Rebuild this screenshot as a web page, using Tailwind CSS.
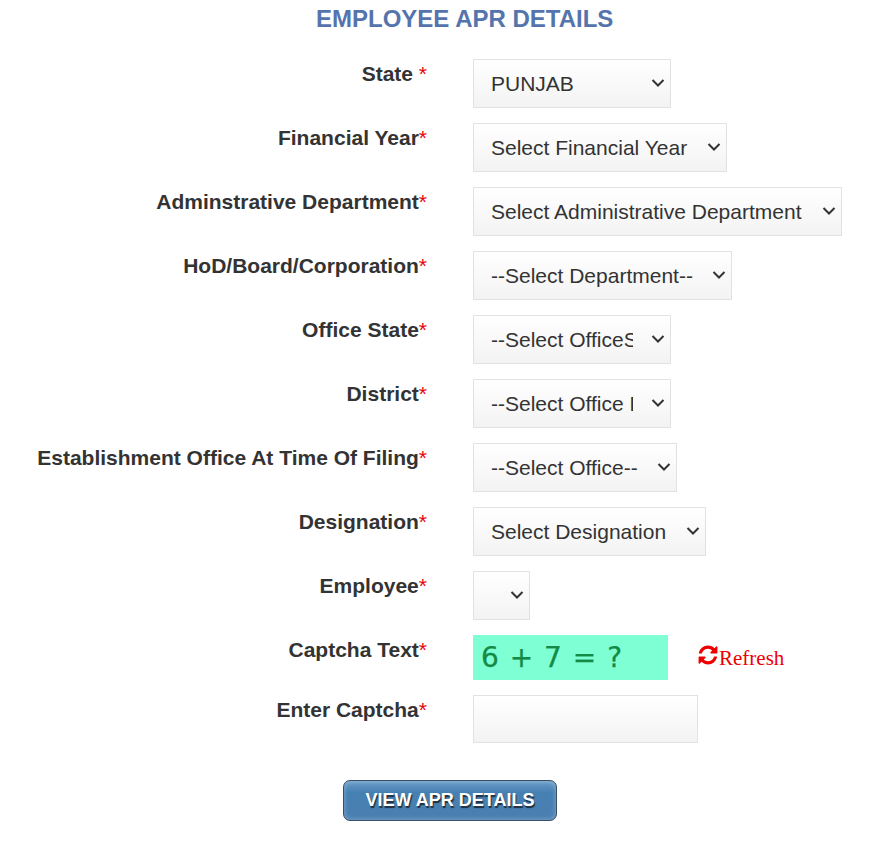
<!DOCTYPE html>
<html lang="en">
<head>
    <meta charset="UTF-8">
    <title>Employee APR Details</title>
    <script src="https://cdn.jsdelivr.net/npm/@tailwindcss/browser@4"></script>
</head>
<body class="bg-white font-['Liberation_Sans',Arial,sans-serif] text-[#333333]">
    <div class="w-[871px] h-[843px] overflow-hidden">
        <h1 class="pl-[316px] pt-[5px] h-[59px] text-[24px] leading-[28px] font-bold text-[#5574ad]">EMPLOYEE APR DETAILS</h1>

        <!-- State -->
        <div class="flex h-[64px]">
            <label class="w-[427px] text-right text-[21px] leading-[30px] font-bold">State <span class="font-normal text-red-600">*</span></label>
            <div class="relative ml-[46px] w-[198px] h-[49px]">
                <select class="appearance-none w-full h-full pl-[17px] pr-[37px] border border-[#e2e2e2] bg-linear-to-b from-white to-[#f3f3f3] text-[21px]"><option>PUNJAB</option></select>
                <svg class="absolute right-[6px] top-[19px] w-[14px] h-[10px] pointer-events-none" viewBox="0 0 14 10" fill="none" stroke="#333" stroke-width="2"><path d="M1.5 2l5.5 5.5L12.500 2"/></svg>
            </div>
        </div>

        <!-- Financial Year -->
        <div class="flex h-[64px]">
            <label class="w-[427px] text-right text-[21px] leading-[30px] font-bold">Financial Year<span class="font-normal text-red-600">*</span></label>
            <div class="relative ml-[46px] w-[254px] h-[49px]">
                <select class="appearance-none w-full h-full pl-[17px] pr-[37px] border border-[#e2e2e2] bg-linear-to-b from-white to-[#f3f3f3] text-[21px]"><option>Select Financial Year</option></select>
                <svg class="absolute right-[6px] top-[19px] w-[14px] h-[10px] pointer-events-none" viewBox="0 0 14 10" fill="none" stroke="#333" stroke-width="2"><path d="M1.5 2l5.5 5.5L12.500 2"/></svg>
            </div>
        </div>

        <!-- Department -->
        <div class="flex h-[64px]">
            <label class="w-[427px] text-right text-[21px] leading-[30px] font-bold">Adminstrative Department<span class="font-normal text-red-600">*</span></label>
            <div class="relative ml-[46px] w-[369px] h-[49px]">
                <select class="appearance-none w-full h-full pl-[17px] pr-[37px] border border-[#e2e2e2] bg-linear-to-b from-white to-[#f3f3f3] text-[21px]"><option>Select Administrative Department</option></select>
                <svg class="absolute right-[6px] top-[19px] w-[14px] h-[10px] pointer-events-none" viewBox="0 0 14 10" fill="none" stroke="#333" stroke-width="2"><path d="M1.5 2l5.5 5.5L12.500 2"/></svg>
            </div>
        </div>

        <!-- HoD -->
        <div class="flex h-[64px]">
            <label class="w-[427px] text-right text-[21px] leading-[30px] font-bold">HoD/Board/Corporation<span class="font-normal text-red-600">*</span></label>
            <div class="relative ml-[46px] w-[259px] h-[49px]">
                <select class="appearance-none w-full h-full pl-[17px] pr-[37px] border border-[#e2e2e2] bg-linear-to-b from-white to-[#f3f3f3] text-[21px]"><option>--Select Department--</option></select>
                <svg class="absolute right-[6px] top-[19px] w-[14px] h-[10px] pointer-events-none" viewBox="0 0 14 10" fill="none" stroke="#333" stroke-width="2"><path d="M1.5 2l5.5 5.5L12.500 2"/></svg>
            </div>
        </div>

        <!-- Office State -->
        <div class="flex h-[64px]">
            <label class="w-[427px] text-right text-[21px] leading-[30px] font-bold">Office State<span class="font-normal text-red-600">*</span></label>
            <div class="relative ml-[46px] w-[198px] h-[49px]">
                <select class="appearance-none w-full h-full pl-[17px] pr-[37px] border border-[#e2e2e2] bg-linear-to-b from-white to-[#f3f3f3] text-[21px]"><option>--Select OfficeState--</option></select>
                <svg class="absolute right-[6px] top-[19px] w-[14px] h-[10px] pointer-events-none" viewBox="0 0 14 10" fill="none" stroke="#333" stroke-width="2"><path d="M1.5 2l5.5 5.5L12.500 2"/></svg>
            </div>
        </div>

        <!-- District -->
        <div class="flex h-[64px]">
            <label class="w-[427px] text-right text-[21px] leading-[30px] font-bold">District<span class="font-normal text-red-600">*</span></label>
            <div class="relative ml-[46px] w-[198px] h-[49px]">
                <select class="appearance-none w-full h-full pl-[17px] pr-[37px] border border-[#e2e2e2] bg-linear-to-b from-white to-[#f3f3f3] text-[21px]"><option>--Select Office District--</option></select>
                <svg class="absolute right-[6px] top-[19px] w-[14px] h-[10px] pointer-events-none" viewBox="0 0 14 10" fill="none" stroke="#333" stroke-width="2"><path d="M1.5 2l5.5 5.5L12.500 2"/></svg>
            </div>
        </div>

        <!-- Establishment Office -->
        <div class="flex h-[64px]">
            <label class="w-[427px] text-right text-[21px] leading-[30px] font-bold">Establishment Office At Time Of Filing<span class="font-normal text-red-600">*</span></label>
            <div class="relative ml-[46px] w-[204px] h-[49px]">
                <select class="appearance-none w-full h-full pl-[17px] pr-[37px] border border-[#e2e2e2] bg-linear-to-b from-white to-[#f3f3f3] text-[21px]"><option>--Select Office--</option></select>
                <svg class="absolute right-[6px] top-[19px] w-[14px] h-[10px] pointer-events-none" viewBox="0 0 14 10" fill="none" stroke="#333" stroke-width="2"><path d="M1.5 2l5.5 5.5L12.500 2"/></svg>
            </div>
        </div>

        <!-- Designation -->
        <div class="flex h-[64px]">
            <label class="w-[427px] text-right text-[21px] leading-[30px] font-bold">Designation<span class="font-normal text-red-600">*</span></label>
            <div class="relative ml-[46px] w-[233px] h-[49px]">
                <select class="appearance-none w-full h-full pl-[17px] pr-[37px] border border-[#e2e2e2] bg-linear-to-b from-white to-[#f3f3f3] text-[21px]"><option>Select Designation</option></select>
                <svg class="absolute right-[6px] top-[19px] w-[14px] h-[10px] pointer-events-none" viewBox="0 0 14 10" fill="none" stroke="#333" stroke-width="2"><path d="M1.5 2l5.5 5.5L12.500 2"/></svg>
            </div>
        </div>

        <!-- Employee -->
        <div class="flex h-[64px]">
            <label class="w-[427px] text-right text-[21px] leading-[30px] font-bold">Employee<span class="font-normal text-red-600">*</span></label>
            <div class="relative ml-[46px] w-[57px] h-[49px]">
                <select class="appearance-none w-full h-full border border-[#e2e2e2] bg-linear-to-b from-white to-[#f3f3f3] text-[21px]"></select>
                <svg class="absolute right-[6px] top-[19px] w-[14px] h-[10px] pointer-events-none" viewBox="0 0 14 10" fill="none" stroke="#333" stroke-width="2"><path d="M1.5 2l5.5 5.5L12.500 2"/></svg>
            </div>
        </div>

        <!-- Captcha -->
        <div class="flex h-[60px]">
            <label class="w-[427px] text-right text-[21px] leading-[30px] font-bold">Captcha Text<span class="font-normal text-red-600">*</span></label>
            <div class="ml-[46px] w-[195px] h-[45px] bg-[#7fffd4] pl-[8px] font-['DejaVu_Sans',sans-serif] text-[28px] leading-[45px] text-[#138a45] [word-spacing:2px] [-webkit-text-stroke:0.25px_#138a45] whitespace-pre">6 + 7 = ?</div>
            <a href="#" class="ml-[29px] mt-[9px] h-[30px] flex items-center font-['Liberation_Serif',serif] text-[21px] text-[#ee0000]">
                <svg class="w-[22px] h-[22px] mb-[9px]" viewBox="0 0 1792 1792" fill="#ee0000"><path d="M1639 1056q0 5-1 7-64 268-268 434.5t-478 166.5q-146 0-282.5-55t-243.5-157l-129 129q-19 19-45 19t-45-19-19-45v-448q0-26 19-45t45-19h448q26 0 45 19t19 45-19 45l-137 137q71 66 161 102t187 36q134 0 250-65t186-179q11-17 53-117 8-23 30-23h192q13 0 22.5 9.5t9.500 22.500zm25-800v448q0 26-19 45t-45 19h-448q-26 0-45-19t-19-45 19-45l138-138q-148-137-349-137-134 0-250 65t-186 179q-11 17-53 117-8 23-30 23h-199q-13 0-22.500-9.500t-9.500-22.500v-7q65-268 270-434.500t480-166.500q146 0 284 55.500t245 156.500l130-129q19-19 45-19t45 19 19 45z"/></svg>Refresh</a>
        </div>

        <!-- Enter Captcha -->
        <div class="flex h-[85px]">
            <label class="w-[427px] text-right text-[21px] leading-[30px] font-bold">Enter Captcha<span class="font-normal text-red-600">*</span></label>
            <input type="text" class="ml-[46px] w-[225px] h-[48px] border border-[#e2e2e2] bg-linear-to-b from-white to-[#f3f3f3]">
        </div>

        <div class="pl-[343px]">
            <button class="w-[214px] h-[41px] rounded-[7px] border border-[#36506b] bg-linear-to-b from-[#6a9cc7] via-[#4680b3] via-30% to-[#4a7fb0] shadow-[inset_0_0_5px_rgba(255,255,255,0.35)] text-white text-[18px] font-bold [text-shadow:1px_2px_1px_#1e2e3e]">VIEW APR DETAILS</button>
        </div>
    </div>
</body>
</html>
